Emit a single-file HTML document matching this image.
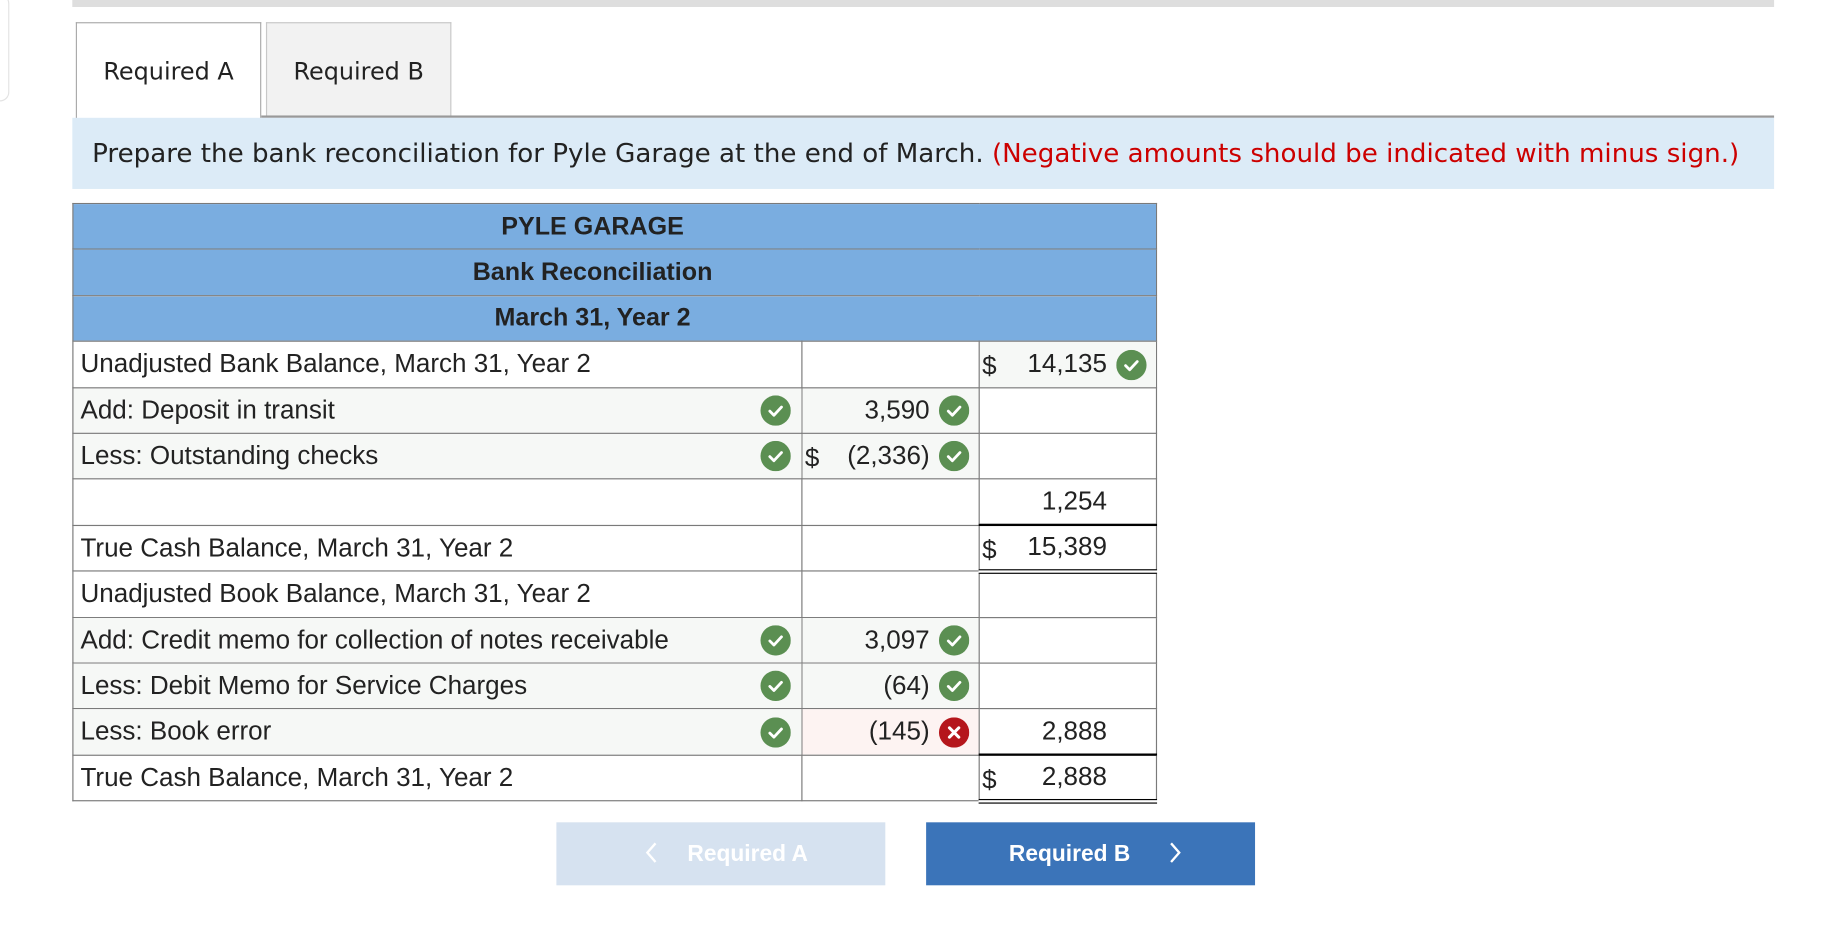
<!DOCTYPE html>
<html><head><meta charset="utf-8"><style>
html,body{margin:0;padding:0;background:#fff;width:1829px;height:938px;overflow:hidden;font-family:"Liberation Sans",Arial,sans-serif;}
#s{position:absolute;left:0;top:0;width:1563px;height:802px;transform:scale(1.1664);transform-origin:0 0;}
.abs{position:absolute;}
table{position:absolute;left:62px;top:174px;border-collapse:collapse;table-layout:fixed;width:929px;}
td{border:1px solid #7a7a7a;height:39.4px;padding:0 6px;font-size:22.3px;color:#222;position:relative;box-sizing:border-box;white-space:nowrap;}
td.h{background:#7aade0;text-align:center;font-weight:bold;font-size:21.5px;color:#222;padding-right:44px;}
.g{background:#f6f8f6;}
.p{background:#fdf3f2;}
.r{text-align:right;}
.ic{position:absolute;top:6.5px;width:26px;height:26px;}
.dl{position:absolute;left:2px;top:8px;}
.tk{border-top:2px solid #000;}
.db{border-bottom:4px double #000;}
.dv{font-family:"DejaVu Sans",Verdana,sans-serif;}
.chev{display:inline-block;vertical-align:middle;}
</style></head><body><div id="s">
<div class="abs" style="left:62px;top:0;width:1459px;height:6px;background:#dedede"></div>
<div class="abs" style="left:-10px;top:-5px;width:16px;height:90px;border:1px solid #e3e3e3;border-radius:8px"></div>
<div class="abs dv" style="left:65px;top:19px;width:157px;height:82px;border:1px solid #aaa;border-bottom:none;background:#fff;font-size:20.5px;color:#222;text-align:center;line-height:82px">Required A</div>
<div class="abs dv" style="left:228px;top:19px;width:157px;height:80px;border:1px solid #c8c8c8;border-bottom:none;background:#f2f2f2;font-size:20.5px;color:#222;text-align:center;line-height:82px">Required B</div>
<div class="abs" style="left:224px;top:99px;width:1297px;height:2px;background:#999"></div>
<div class="abs dv" style="left:62px;top:101px;width:1459px;height:61px;background:#dcebf7;font-size:22.4px;color:#222;line-height:62px;padding-left:17px;box-sizing:border-box;white-space:nowrap">Prepare the bank reconciliation for Pyle Garage at the end of March. <span style="color:#c00">(Negative amounts should be indicated with minus sign.)</span></div>
<svg width="0" height="0" style="position:absolute"><defs>
<symbol id="ck" viewBox="0 0 26 26"><circle cx="13" cy="13" r="13" fill="#5b8f52"/><polyline points="8,13.5 11.5,17 18,10" fill="none" stroke="#fff" stroke-width="2.4" stroke-linecap="round" stroke-linejoin="round"/></symbol>
<symbol id="xx" viewBox="0 0 26 26"><circle cx="13" cy="13" r="13" fill="#b5161c"/><path d="M9 9L17 17M17 9L9 17" stroke="#fff" stroke-width="2.6" stroke-linecap="round"/></symbol>
</defs></svg>
<table>
<colgroup><col style="width:625px"><col style="width:152px"><col style="width:152px"></colgroup>
<tr><td class="h" colspan="3">PYLE GARAGE</td></tr>
<tr><td class="h" colspan="3">Bank Reconciliation</td></tr>
<tr><td class="h" colspan="3">March 31, Year 2</td></tr>
<tr><td>Unadjusted Bank Balance, March 31, Year 2</td><td></td><td class="g r" style="padding-right:42px"><span class="dl">$</span>14,135<svg class="ic" style="right:8px"><use href="#ck"/></svg></td></tr>
<tr><td class="g">Add: Deposit in transit<svg class="ic" style="right:9px"><use href="#ck"/></svg></td><td class="g r" style="padding-right:42px">3,590<svg class="ic" style="right:8px"><use href="#ck"/></svg></td><td></td></tr>
<tr><td class="g">Less: Outstanding checks<svg class="ic" style="right:9px"><use href="#ck"/></svg></td><td class="g r" style="padding-right:42px"><span class="dl">$</span>(2,336)<svg class="ic" style="right:8px"><use href="#ck"/></svg></td><td></td></tr>
<tr><td></td><td></td><td class="r" style="padding-right:42px">1,254</td></tr>
<tr><td>True Cash Balance, March 31, Year 2</td><td></td><td class="r tk db" style="padding-right:42px"><span class="dl">$</span>15,389</td></tr>
<tr><td>Unadjusted Book Balance, March 31, Year 2</td><td></td><td></td></tr>
<tr><td class="g">Add: Credit memo for collection of notes receivable<svg class="ic" style="right:9px"><use href="#ck"/></svg></td><td class="g r" style="padding-right:42px">3,097<svg class="ic" style="right:8px"><use href="#ck"/></svg></td><td></td></tr>
<tr><td class="g">Less: Debit Memo for Service Charges<svg class="ic" style="right:9px"><use href="#ck"/></svg></td><td class="g r" style="padding-right:42px">(64)<svg class="ic" style="right:8px"><use href="#ck"/></svg></td><td></td></tr>
<tr><td class="g">Less: Book error<svg class="ic" style="right:9px"><use href="#ck"/></svg></td><td class="p r" style="padding-right:42px">(145)<svg class="ic" style="right:8px"><use href="#xx"/></svg></td><td class="r" style="padding-right:42px">2,888</td></tr>
<tr><td>True Cash Balance, March 31, Year 2</td><td></td><td class="r tk db" style="padding-right:42px"><span class="dl">$</span>2,888</td></tr>
</table>
<div class="abs" style="left:477px;top:705px;width:282px;height:54px;background:#d6e2f0;color:#fff;font-weight:bold;font-size:19.5px;line-height:55px;text-align:center;padding-left:10px;box-sizing:border-box"><svg class="chev" width="12" height="20" style="margin-right:24px;margin-top:-4px"><polyline points="9,2 2,10 9,18" fill="none" stroke="#fff" stroke-width="2"/></svg>Required A</div>
<div class="abs" style="left:794px;top:705px;width:282px;height:54px;background:#3b74b9;color:#fff;font-weight:bold;font-size:19.5px;line-height:55px;text-align:center;padding-left:8px;box-sizing:border-box">Required B<svg class="chev" width="12" height="20" style="margin-left:32px;margin-top:-4px"><polyline points="3,2 10,10 3,18" fill="none" stroke="#fff" stroke-width="2"/></svg></div>
</div></body></html>
